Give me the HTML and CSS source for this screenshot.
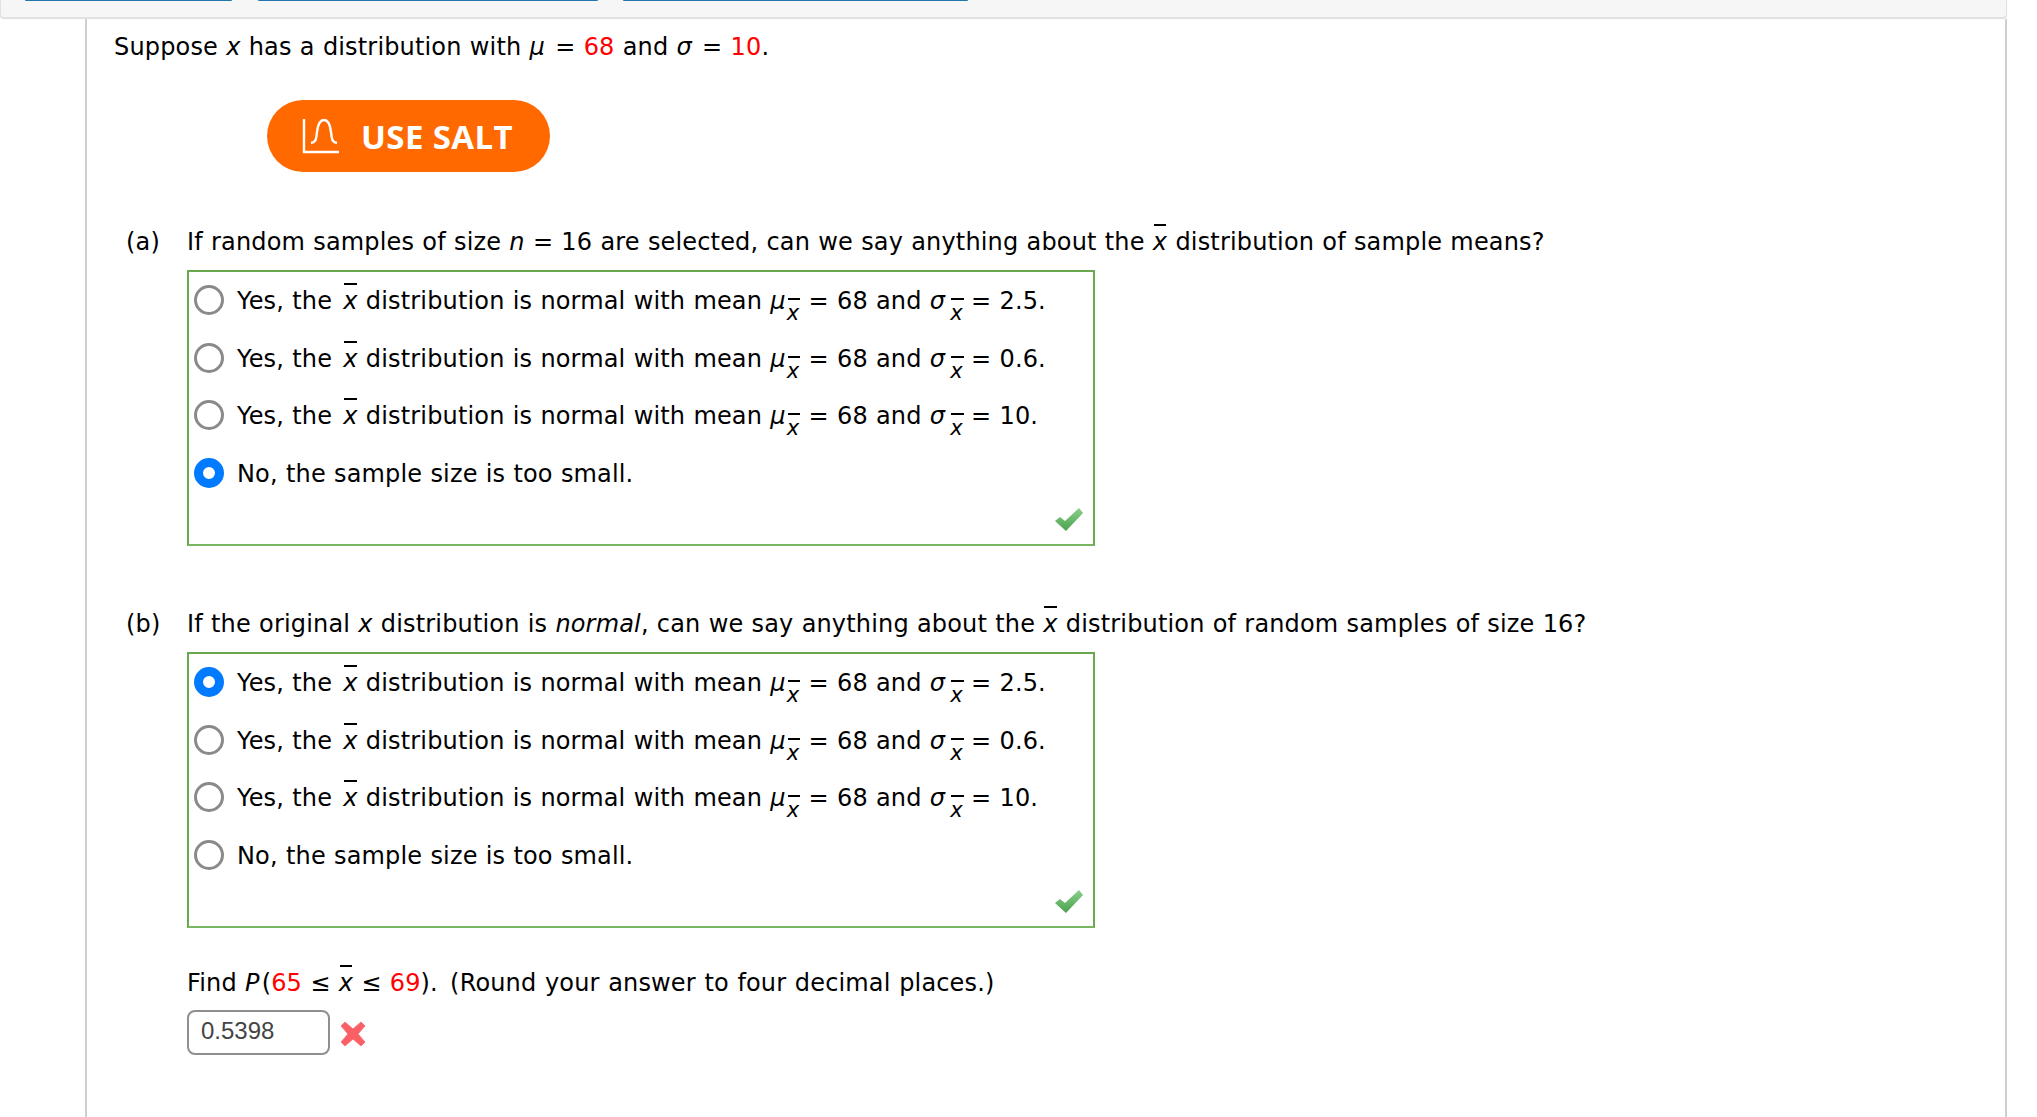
FILE: index.html
```html
<!DOCTYPE html>
<html>

<head>
    <meta name="viewport" content="width=device-width, initial-scale=1.0">
    <title>Question</title>
    <link rel="stylesheet" href="styles.css">
</head>

<body>
    <div class="top-bar">
        <div class="top-btn top-btn-1"></div>
        <div class="top-btn top-btn-2"></div>
        <div class="top-btn top-btn-3"></div>
    </div>

    <div class="question">
        <p class="intro">Suppose <i>x</i> has a distribution with <i class="greek">μ</i> = <span class="red">68</span> and <i class="greek">σ</i> = <span class="red">10</span>.</p>

        <button class="salt-btn">
            <svg class="salt-icon" width="38" height="36" viewBox="0 0 38 36" fill="none" stroke="#fff" stroke-width="2.4">
                <path d="M2 1V34H37" />
                <path d="M9 25C14 24 14 22 15 14C16 5 18 2 22 2C26 2 28 5 29 14C30 22 30 24 35 25" />
            </svg>
            USE SALT
        </button>

        <div class="part part-a">
            <div class="part-title"><span class="part-label">(a)</span><span>If random samples of size <i>n</i> = 16 are selected, can we say anything about the <i class="xbar">x</i> distribution of sample means?</span></div>
            <div class="answers">
                <label class="row"><span class="radio"></span><span class="row-text">Yes, the <i class="xbar">x</i> distribution is normal with mean <i>μ</i><i class="sub-xbar">x</i> = 68 and <i>σ</i><i class="sub-xbar sub-sigma">x</i> = 2.5.</span></label>
                <label class="row row-short"><span class="radio"></span><span class="row-text">Yes, the <i class="xbar">x</i> distribution is normal with mean <i>μ</i><i class="sub-xbar">x</i> = 68 and <i>σ</i><i class="sub-xbar sub-sigma">x</i> = 0.6.</span></label>
                <label class="row"><span class="radio"></span><span class="row-text">Yes, the <i class="xbar">x</i> distribution is normal with mean <i>μ</i><i class="sub-xbar">x</i> = 68 and <i>σ</i><i class="sub-xbar sub-sigma">x</i> = 10.</span></label>
                <label class="row"><span class="radio checked"></span><span class="row-text">No, the sample size is too small.</span></label>
                <svg class="check" width="30" height="26" viewBox="0 0 30 26">
                    <defs>
                        <linearGradient id="check-a" x1="0" y1="0" x2="0" y2="1">
                            <stop offset="0" stop-color="#8ccf8c" />
                            <stop offset="1" stop-color="#4aa24e" />
                        </linearGradient>
                    </defs>
                    <path d="M1 14L6 10L11 14L25 1L29 6L12 24Z" fill="url(#check-a)" />
                </svg>
            </div>
        </div>

        <div class="part part-b">
            <div class="part-title"><span class="part-label">(b)</span><span>If the original <i>x</i> distribution is <i>normal</i>, can we say anything about the <i class="xbar">x</i> distribution of random samples of size 16?</span></div>
            <div class="answers">
                <label class="row"><span class="radio checked"></span><span class="row-text">Yes, the <i class="xbar">x</i> distribution is normal with mean <i>μ</i><i class="sub-xbar">x</i> = 68 and <i>σ</i><i class="sub-xbar sub-sigma">x</i> = 2.5.</span></label>
                <label class="row row-short"><span class="radio"></span><span class="row-text">Yes, the <i class="xbar">x</i> distribution is normal with mean <i>μ</i><i class="sub-xbar">x</i> = 68 and <i>σ</i><i class="sub-xbar sub-sigma">x</i> = 0.6.</span></label>
                <label class="row"><span class="radio"></span><span class="row-text">Yes, the <i class="xbar">x</i> distribution is normal with mean <i>μ</i><i class="sub-xbar">x</i> = 68 and <i>σ</i><i class="sub-xbar sub-sigma">x</i> = 10.</span></label>
                <label class="row"><span class="radio"></span><span class="row-text">No, the sample size is too small.</span></label>
                <svg class="check" width="30" height="26" viewBox="0 0 30 26">
                    <defs>
                        <linearGradient id="check-b" x1="0" y1="0" x2="0" y2="1">
                            <stop offset="0" stop-color="#8ccf8c" />
                            <stop offset="1" stop-color="#4aa24e" />
                        </linearGradient>
                    </defs>
                    <path d="M1 14L6 10L11 14L25 1L29 6L12 24Z" fill="url(#check-b)" />
                </svg>
            </div>

            <p class="find">Find <i class="prob">P</i>(<span class="red">65</span> ≤ <i class="xbar">x</i> ≤ <span class="red">69</span>). <span class="round">(Round your answer to four decimal places.)</span></p>
            <div class="answer-line">
                <div class="answer-input">0.5398</div>
                <svg class="cross" width="26" height="26" viewBox="0 0 26 26">
                    <path d="M5 1L13 8L21 1L25 5L18 13L25 21L21 25L13 18L5 25L1 21L8 13L1 5Z" fill="#fb5f66" stroke="#f27a7f" stroke-width="1" />
                </svg>
            </div>
        </div>
    </div>
</body>

</html>
```

FILE: styles.css
```css
body {
    margin: 0;
    background: #fff;
    color: #000;
    font-family: "DejaVu Sans", Verdana, sans-serif;
    font-size: 24px;
    line-height: 30px;
    letter-spacing: 0.16px;
    word-spacing: 0.4px;
}

p {
    margin: 0;
}

.red {
    color: #f00;
}

.greek {
    margin-right: 2px;
}

/* top toolbar, mostly scrolled away */
.top-bar {
    display: flex;
    width: 2007px;
    height: 18px;
    box-sizing: border-box;
    background: #f6f6f6;
    border: 1px solid #e2e2e2;
    border-top: none;
    border-radius: 0 0 4px 4px;
    box-shadow: 0 1px 1px #ddd;
}

.top-btn {
    height: 1px;
    background: #1f77ad;
    border-radius: 0 0 3px 3px;
}

.top-btn-1 {
    width: 207px;
    margin-left: 24px;
}

.top-btn-2 {
    width: 340px;
    margin-left: 26px;
}

.top-btn-3 {
    width: 345px;
    margin-left: 25px;
}

.question {
    width: 1922px;
    height: 1098px;
    margin: 1px 0 0 85px;
    padding: 13px 26px 0 27px;
    box-sizing: border-box;
    border-left: 2px solid #cfcfcf;
    border-right: 2px solid #cfcfcf;
}

.salt-btn {
    display: flex;
    align-items: center;
    gap: 21px;
    width: 283px;
    height: 72px;
    margin: 38px 0 0 153px;
    padding: 0 0 0 35px;
    border: none;
    border-radius: 36px;
    background: #ff6900;
    color: #fff;
    font-family: "Open Sans", sans-serif;
    font-weight: 700;
    font-size: 33px;
    letter-spacing: 0.4px;
}

.part {
    padding-left: 12px;
}

.part-a {
    margin-top: 55px;
}

.part-b {
    margin-top: 63px;
}

.part-title {
    display: flex;
}

.part-label {
    width: 61px;
}

.answers {
    position: relative;
    width: 908px;
    height: 276px;
    box-sizing: border-box;
    margin: 13px 0 0 61px;
    border: 2px solid #6aa84f;
    border-bottom-color: #7ab55f;
}

.row {
    display: flex;
    align-items: center;
    height: 58px;
    padding-left: 5px;
    gap: 13px;
}

.row-short {
    height: 57px;
}

.row-text {
    padding-top: 1px;
}

.row:nth-child(4) .row-text {
    padding-top: 0;
}

.radio {
    width: 30px;
    height: 30px;
    margin-top: -2px;
    box-sizing: border-box;
    border: 3px solid #8a8a8a;
    border-radius: 50%;
    flex-shrink: 0;
}

.radio.checked {
    border: 9px solid #007aff;
}

.xbar {
    position: relative;
}

.row-text .xbar {
    margin-left: 3px;
}

.xbar::before {
    content: "";
    position: absolute;
    left: 1px;
    right: 1px;
    top: -4px;
    height: 2px;
    background: #000;
}

.sub-xbar {
    position: relative;
    display: inline-block;
    font-size: 21px;
    top: 11px;
    margin: 0 1px 0 1px;
}

.sub-xbar::before {
    content: "";
    position: absolute;
    left: 1px;
    right: -1px;
    top: 0;
    height: 2px;
    background: #000;
}

.sub-sigma {
    margin-left: 5px;
    margin-right: 0;
}

.check {
    position: absolute;
    right: 9px;
    bottom: 11px;
}

.find {
    margin: 40px 0 0 61px;
}

.prob {
    margin-right: 2px;
}

.round {
    margin-left: 4px;
    word-spacing: 0.8px;
}

.answer-line {
    display: flex;
    align-items: center;
    gap: 10px;
    margin: 12px 0 0 61px;
}

.answer-input {
    width: 143px;
    height: 45px;
    box-sizing: border-box;
    padding: 4px 12px;
    border: 2px solid #8f8f8f;
    border-radius: 8px;
    color: #444;
    font-family: "Liberation Sans", Arial, sans-serif;
    font-size: 24px;
    letter-spacing: 0;
    word-spacing: 0;
}

.cross {
    margin-top: 3px;
}
```
